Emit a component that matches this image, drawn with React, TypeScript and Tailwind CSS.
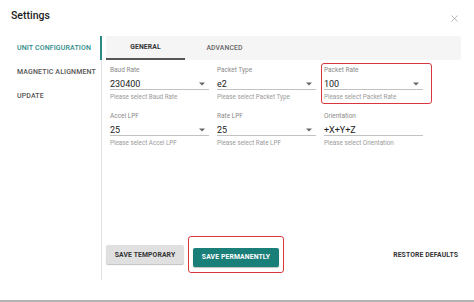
import { X } from "lucide-react";

interface FieldProps {
  label: string;
  value: string;
  helper: string;
  select?: boolean;
  marked?: boolean;
}

const ROWS: FieldProps[][] = [
  [
    { label: "Baud Rate", value: "230400", helper: "Please select Baud Rate", select: true },
    { label: "Packet Type", value: "e2", helper: "Please select Packet Type", select: true },
    { label: "Packet Rate", value: "100", helper: "Please select Packet Rate", select: true, marked: true },
  ],
  [
    { label: "Accel LPF", value: "25", helper: "Please select Accel LPF", select: true },
    { label: "Rate LPF", value: "25", helper: "Please select Rate LPF", select: true },
    { label: "Orientation", value: "+X+Y+Z", helper: "Please select Orientation" },
  ],
];

function Field({ label, value, helper, select, marked }: FieldProps) {
  return (
    <div className="relative w-[99px]">
      {/* red annotation box */}
      {marked && (
        <div className="absolute -left-[3px] -top-[3px] -bottom-[3px] -right-[9px] border-[1.5px] border-[#d9363e] rounded-[3px]" />
      )}
      <div className="text-[6.5px] leading-[9px] text-[#8a8a8a]">{label}</div>
      <div className="mt-[3px] flex h-[12px] items-center justify-between border-b border-[#c2c2c2]">
        <span className="text-[9px] leading-[12px] text-[#222]">{value}</span>
        {select && (
          <svg width="6" height="4" viewBox="0 0 6 4" className="mr-[4px]">
            <path d="M0 0.5 L6 0.5 L3 3.5 Z" fill="#666" />
          </svg>
        )}
      </div>
      <div className="mt-[3px] text-[6.3px] leading-[8px] text-[#9a9a9a]">{helper}</div>
    </div>
  );
}

export default function App() {
  return (
    <div
      className="relative flex h-[302px] w-[474px] flex-col overflow-hidden bg-white"
      style={{ fontFamily: "Roboto, 'Liberation Sans', sans-serif" }}
    >
      {/* Header */}
      <div className="flex h-[36px] items-start justify-between pl-[11px] pr-[14px] pt-[9px]">
        <h1 className="text-[10.5px] font-medium leading-[14px] text-[#222]">Settings</h1>
        <X size={11} strokeWidth={1.3} className="mt-[4px] text-[#888]" />
      </div>

      <div className="flex h-[244px]">
        {/* Left nav */}
        <nav className="w-[102px] border-r border-[#e3e3e3]">
          <div className="-mr-px flex h-[24px] items-center border-r-2 border-[#2b8a86] pl-[17px] text-[7px] font-medium tracking-[0.02em] text-[#2b8a86]">
            UNIT CONFIGURATION
          </div>
          <div className="flex h-[24px] items-center pl-[17px] text-[7px] font-medium tracking-[0.02em] text-[#555]">
            MAGNETIC ALIGNMENT
          </div>
          <div className="flex h-[24px] items-center pl-[17px] text-[7px] font-medium tracking-[0.02em] text-[#555]">
            UPDATE
          </div>
        </nav>

        {/* Content */}
        <div className="flex flex-1 flex-col pl-[4px] pr-[13px]">
          <div className="flex h-[24px] bg-[#f5f5f5]">
            <div className="flex w-[79px] items-center justify-center border-b-2 border-[#555] text-[6.8px] font-bold tracking-[0.02em] text-[#333]">
              GENERAL
            </div>
            <div className="flex w-[79px] items-center justify-center text-[6.8px] font-medium tracking-[0.02em] text-[#666]">
              ADVANCED
            </div>
          </div>

          <div className="mt-[6px] flex flex-col gap-[11px] pl-[4px]">
            {ROWS.map((row, i) => (
              <div key={i} className="flex gap-[8px]">
                {row.map((f) => (
                  <Field key={f.label} {...f} />
                ))}
              </div>
            ))}
          </div>

          <div className="flex-1" />

          <div className="mb-[13px] flex items-center justify-between">
            <div className="flex items-center gap-[9px]">
              <button className="h-[19px] w-[78px] rounded-[2px] bg-[#e0e0e0] text-[6.8px] font-bold tracking-[0.02em] text-[#333] shadow-[0_1px_1px_rgba(0,0,0,0.25)]">
                SAVE TEMPORARY
              </button>
              <div className="relative">
                <div className="absolute -inset-x-[5px] -inset-y-[6px] rounded-[3px] border-[1.5px] border-[#d9363e]" />
                <button className="relative h-[19px] w-[86px] rounded-[2px] bg-[#1b7f79] text-[6.8px] font-bold tracking-[0.02em] text-white shadow-[0_1px_1px_rgba(0,0,0,0.25)]">
                  SAVE PERMANENTLY
                </button>
              </div>
            </div>
            <button className="mr-[-5px] h-[19px] px-[8px] text-[6.8px] font-bold tracking-[0.02em] text-[#333]">
              RESTORE DEFAULTS
            </button>
          </div>
        </div>
      </div>

      <div className="flex-1" />
      <div className="h-[2px] bg-[#b3b3b3]" />
    </div>
  );
}
